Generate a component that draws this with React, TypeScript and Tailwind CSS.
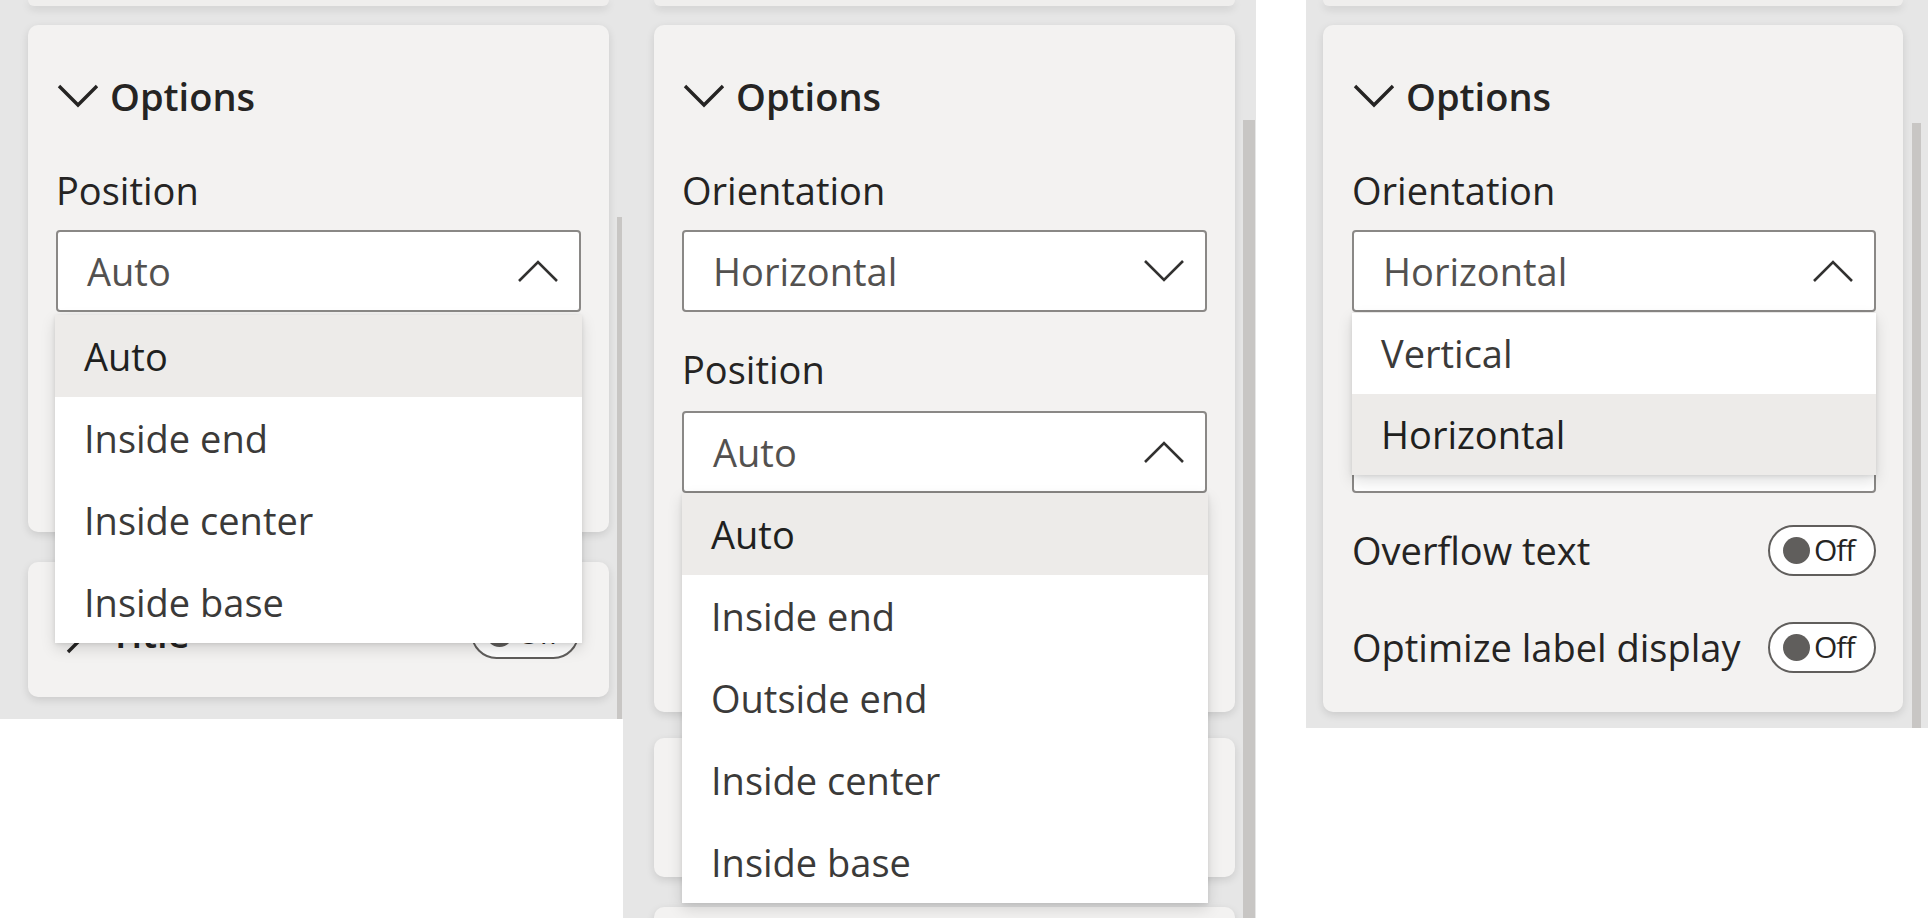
import { ReactNode } from "react";

const font = { fontFamily: '"Open Sans", "Noto Sans", Arial, sans-serif' };

function ChevronDown({ className = "" }: { className?: string }) {
	return (
		<svg width="44" height="26" viewBox="0 0 44 26" className={className}>
			<path d="M3 3 L22 22 L41 3" fill="none" stroke="#252423" strokeWidth="3.4" />
		</svg>
	);
}

function ChevronRight() {
	return (
		<svg width="26" height="44" viewBox="0 0 26 44">
			<path d="M4 3 L23 22 L4 41" fill="none" stroke="#252423" strokeWidth="3.4" />
		</svg>
	);
}

function Caret({ up }: { up: boolean }) {
	return (
		<svg width="42" height="24" viewBox="0 0 42 24">
			<path
				d={up ? "M2 22 L21 3 L40 22" : "M2 2 L21 21 L40 2"}
				fill="none"
				stroke="#323130"
				strokeWidth="2.6"
			/>
		</svg>
	);
}

function Header({ title, open = true, right }: { title: string; open?: boolean; right?: ReactNode }) {
	return (
		<div className="flex h-[52px] items-center">
			{open ? <ChevronDown /> : <div className="ml-[8px] w-[36px]"><ChevronRight /></div>}
			<span className="ml-[10px] text-[38px] font-semibold leading-[52px] text-[#252423]">{title}</span>
			{right && <div className="ml-auto">{right}</div>}
		</div>
	);
}

function Label({ children, className = "" }: { children: ReactNode; className?: string }) {
	return <div className={`h-[52px] text-[38px] leading-[52px] text-[#252423] ${className}`}>{children}</div>;
}

function Select({ value, up, className = "" }: { value: string; up: boolean; className?: string }) {
	return (
		<div
			className={`flex h-[82px] shrink-0 items-center rounded-[4px] border-2 border-[#8a8886] bg-white pl-[29px] pr-[20px] ${className}`}
		>
			<span className="text-[38px] leading-[52px] text-[#53514f]">{value}</span>
			<div className="ml-auto">
				<Caret up={up} />
			</div>
		</div>
	);
}

function Toggle() {
	return (
		<div className="flex h-[51px] w-[108px] items-center rounded-full border-[2.5px] border-[#605e5c] bg-white pl-[13px]">
			<div className="h-[27px] w-[27px] rounded-full bg-[#605e5c]" />
			<span className="ml-[4px] text-[30px] leading-none tracking-[-1px] text-[#252423]">Off</span>
		</div>
	);
}

function Menu({ items, active, rowH, className }: { items: string[]; active: string; rowH: string; className: string }) {
	return (
		<div
			className={`absolute bg-white shadow-[0_6px_14px_rgba(0,0,0,0.13),0_1px_4px_rgba(0,0,0,0.1)] ${className}`}
		>
			{items.map((it) => (
				<div
					key={it}
					className={`flex ${rowH} items-center pl-[29px] text-[38px] ${
						it === active ? "bg-[#edebe9] text-[#201f1e]" : "text-[#3b3a39]"
					}`}
				>
					{it}
				</div>
			))}
		</div>
	);
}

const card = "shrink-0 rounded-[10px] bg-[#f3f2f1] shadow-[0_3px_8px_rgba(0,0,0,0.12)]";

function Stub({ className }: { className: string }) {
	return (
		<div
			className={`h-[6px] shrink-0 rounded-b-[10px] bg-[#efeeed] shadow-[0_3px_8px_rgba(0,0,0,0.12)] ${className}`}
		/>
	);
}

export default function App() {
	return (
		<div className="flex h-[918px] w-[1928px] items-start overflow-hidden bg-white" style={font}>
			{/* Column 1 */}
			<div className="relative flex h-[719px] w-[623px] shrink-0 flex-col bg-[#e6e6e6]">
				<Stub className="ml-[28px] w-[581px]" />
				<div className={`${card} ml-[28px] mt-[19px] h-[507px] w-[581px] px-[28px] pt-[45px]`}>
					<Header title="Options" />
					<Label className="mt-[42px]">Position</Label>
					<Select className="mt-[14px]" value="Auto" up />
				</div>
				<div className={`${card} ml-[28px] mt-[30px] h-[135px] w-[581px] pl-[28px] pr-[30px] pt-[45px]`}>
					<Header title="Title" open={false} right={<Toggle />} />
				</div>
				<div className="absolute right-[1px] top-[217px] bottom-0 w-[5px] bg-[#c8c6c4]" />
				<Menu
					className="left-[55px] top-[315px] w-[527px]"
					rowH="h-[82px]"
					active="Auto"
					items={["Auto", "Inside end", "Inside center", "Inside base"]}
				/>
			</div>

			{/* Column 2 */}
			<div className="relative flex h-[918px] w-[633px] shrink-0 flex-col overflow-hidden bg-[#e6e6e6]">
				<Stub className="ml-[31px] w-[581px]" />
				<div className={`${card} ml-[31px] mt-[19px] flex h-[687px] w-[581px] flex-col px-[28px] pt-[45px]`}>
					<Header title="Options" />
					<Label className="mt-[42px]">Orientation</Label>
					<Select className="mt-[14px]" value="Horizontal" up={false} />
					<Label className="mt-[31px]">Position</Label>
					<Select className="mt-[16px]" value="Auto" up />
				</div>
				<div className={`${card} ml-[31px] mt-[26px] h-[139px] w-[581px]`} />
				<div className={`${card} ml-[31px] mt-[30px] h-[139px] w-[581px]`} />
				<div className="absolute right-[1px] top-[120px] bottom-0 w-[12px] bg-[#c8c6c4]" />
				<Menu
					className="left-[59px] top-[493px] w-[526px]"
					rowH="h-[82px]"
					active="Auto"
					items={["Auto", "Inside end", "Outside end", "Inside center", "Inside base"]}
				/>
			</div>

			<div className="w-[50px] shrink-0" />

			{/* Column 3 */}
			<div className="relative flex h-[728px] w-[622px] shrink-0 flex-col bg-[#e6e6e6]">
				<Stub className="ml-[17px] w-[580px]" />
				<div className={`${card} ml-[17px] mt-[19px] flex h-[687px] w-[580px] flex-col pl-[29px] pr-[27px] pt-[45px]`}>
					<Header title="Options" />
					<Label className="mt-[42px]">Orientation</Label>
					<Select className="mt-[14px]" value="Horizontal" up />
					<div className="mt-[31px] h-[52px]" />
					<div className="mt-[16px] h-[82px] shrink-0 rounded-[4px] border-2 border-[#8a8886] bg-white" />
					<div className="mt-[31px] flex h-[52px] items-center justify-between">
						<span className="text-[38px] text-[#252423]">Overflow text</span>
						<Toggle />
					</div>
					<div className="mt-[45px] flex h-[52px] items-center justify-between">
						<span className="text-[38px] text-[#252423]">Optimize label display</span>
						<Toggle />
					</div>
				</div>
				<div className="absolute right-[7px] top-[123px] bottom-0 w-[9px] bg-[#c8c6c4]" />
				<Menu
					className="left-[46px] top-[313px] w-[524px]"
					rowH="h-[81px]"
					active="Horizontal"
					items={["Vertical", "Horizontal"]}
				/>
			</div>
		</div>
	);
}
